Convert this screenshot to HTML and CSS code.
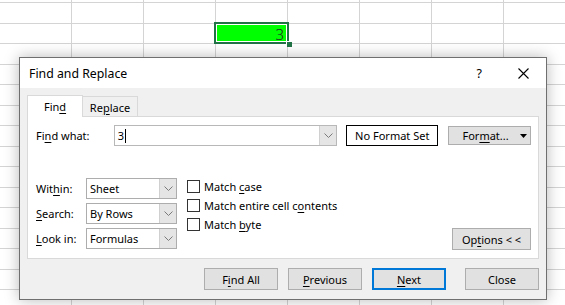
FILE: index.html
```html
<!DOCTYPE html>
<html>
<head>
<meta charset="utf-8">
<link rel="stylesheet" href="styles.css">
</head>
<body>
<div class="sheet">
  <div class="cell-sel"><span class="cell-val">3</span><i class="handle"></i></div>
</div>
<div class="dialog">
  <div class="titlebar">
    <span class="title">Find and Replace</span>
    <span class="help">?</span>
    <span class="close-x"><svg width="11" height="11" viewBox="0 0 11 11"><path d="M0.5 0.5L10.5 10.5M10.5 0.5L0.5 10.5" stroke="#000" stroke-width="1.1" fill="none"/></svg></span>
  </div>
  <div class="dbody">
    <div class="tabs">
      <div class="tab active">Fin<u>d</u></div>
      <div class="tab">Re<u>p</u>lace</div>
    </div>
    <div class="panel">
      <div class="find-row">
        <label class="lbl-find">Fi<u>n</u>d what:</label>
        <div class="combo combo-find">
          <span class="combo-text">3<i class="caret"></i></span>
          <span class="combo-btn"><svg width="9" height="5" viewBox="0 0 9 5"><path d="M0.5 0.5L4.5 4.5L8.5 0.5" stroke="#7a7a7a" fill="none"/></svg></span>
        </div>
        <div class="nofmt">No Format Set</div>
        <div class="btn fmt">For<u>m</u>at...<svg class="tri" width="7" height="4" viewBox="0 0 7 4"><path d="M0 0H7L3.5 4Z" fill="#000"/></svg></div>
      </div>
      <div class="opts">
        <div class="selects">
          <label>Wit<u>h</u>in:</label>
          <div class="combo"><span class="combo-text">Sheet</span><span class="combo-btn"><svg width="9" height="5" viewBox="0 0 9 5"><path d="M0.5 0.5L4.5 4.5L8.5 0.5" stroke="#7a7a7a" fill="none"/></svg></span></div>
          <label><u>S</u>earch:</label>
          <div class="combo"><span class="combo-text">By Rows</span><span class="combo-btn"><svg width="9" height="5" viewBox="0 0 9 5"><path d="M0.5 0.5L4.5 4.5L8.5 0.5" stroke="#7a7a7a" fill="none"/></svg></span></div>
          <label><u>L</u>ook in:</label>
          <div class="combo"><span class="combo-text">Formulas</span><span class="combo-btn"><svg width="9" height="5" viewBox="0 0 9 5"><path d="M0.5 0.5L4.5 4.5L8.5 0.5" stroke="#7a7a7a" fill="none"/></svg></span></div>
        </div>
        <div class="checks">
          <div class="chk"><i class="box"></i><span>Match <u>c</u>ase</span></div>
          <div class="chk"><i class="box"></i><span>Match entire cell c<u>o</u>ntents</span></div>
          <div class="chk"><i class="box"></i><span>Match <u>b</u>yte</span></div>
        </div>
        <div class="btn optbtn">Op<u>t</u>ions &lt; &lt;</div>
      </div>
    </div>
    <div class="actions">
      <div class="btn act">F<u>i</u>nd All</div>
      <div class="btn act"><u>P</u>revious</div>
      <div class="btn act primary"><u>N</u>ext</div>
      <div class="btn act close">Close</div>
    </div>
  </div>
</div>
</body>
</html>
```
FILE: styles.css
```css
html, body {
  margin: 0;
  padding: 0;
}
body {
  width: 565px;
  height: 305px;
  overflow: hidden;
  position: relative;
  background-color: #fff;
  font-family: "Noto Sans", "Open Sans", sans-serif;
}
.sheet {
  width: 565px;
  height: 305px;
  position: relative;
  background-image:
    linear-gradient(to right, #d4d4d4 1px, transparent 1px),
    linear-gradient(to bottom, #d4d4d4 0, #d4d4d4 1px, transparent 1px, transparent 20px, #d4d4d4 20px, #d4d4d4 21px, transparent 21px);
  background-size: 72px 100%, 100% 41px;
  background-position: 71px 0, 0 23px;
}
.cell-sel {
  position: absolute;
  left: 214px;
  top: 22px;
  width: 71px;
  height: 18px;
  border: 2px solid #217346;
  box-shadow: inset 0 0 0 1px #fff;
  background: #00ff00;
  display: flex;
  justify-content: flex-end;
  align-items: center;
}
.cell-val {
  font-family: "Noto Sans", sans-serif;
  font-weight: 300;
  font-size: 15px;
  line-height: 16px;
  color: #222;
  margin-right: 3px;
  margin-top: 1px;
}
.handle {
  position: absolute;
  right: -5px;
  bottom: -5px;
  width: 5px;
  height: 5px;
  background: #217346;
  border: 1px solid #fff;
  border-width: 1px 0 0 1px;
}

/* dialog */
.dialog {
  position: absolute;
  left: 19px;
  top: 57px;
  width: 526px;
  height: 241px;
  border: 1px solid #6f6f6f;
  background: #f0f0f0;
  box-shadow: 0 0 14px rgba(0,0,0,0.28);
  display: flex;
  flex-direction: column;
  font-size: 11px;
  color: #000;
}
.titlebar {
  height: 30px;
  background: #fff;
  display: flex;
  align-items: center;
  padding-left: 9px;
}
.title {
  font-size: 12.3px;
  flex: 1;
  margin-top: 1px;
}
.help {
  font-size: 12.5px;
  margin-right: 36px;
}
.close-x {
  display: flex;
  margin-right: 17px;
}
.dbody {
  flex: 1;
  padding: 8px 7px 0 7px;
  display: flex;
  flex-direction: column;
}
.tabs {
  display: flex;
  height: 21px;
  align-items: flex-end;
  position: relative;
  z-index: 1;
  margin-bottom: -1px;
}
.tab {
  box-sizing: border-box;
  width: 56px;
  height: 20px;
  border: 1px solid #d9d9d9;
  border-bottom: none;
  background: #f0f0f0;
  display: flex;
  align-items: center;
  justify-content: center;
  margin-bottom: 1px;
  padding-top: 1px;
}
.tab.active {
  height: 22px;
  background: #fff;
  margin-bottom: 0;
  padding-bottom: 1px;
}
.tab + .tab {
  margin-left: -1px;
}
.panel {
  box-sizing: border-box;
  height: 143px;
  background: #fff;
  border: 1px solid #d9d9d9;
  padding: 8px 7px 8px 8px;
  display: flex;
  flex-direction: column;
}
.find-row {
  display: flex;
  align-items: center;
  height: 21px;
}
.lbl-find {
  width: 78px;
}
.combo {
  box-sizing: border-box;
  height: 21px;
  border: 1px solid #adadad;
  background: #fff;
  display: flex;
  align-items: stretch;
}
.combo-find {
  width: 224px;
  border-color: #b8b8b8;
}
.combo-text {
  flex: 1;
  padding-left: 3px;
  display: flex;
  align-items: center;
}
.caret {
  display: inline-block;
  width: 1px;
  height: 14px;
  background: #000;
  margin-left: 1px;
}
.combo-btn {
  width: 16px;
  background: #e5e5e5;
  border-left: 1px solid #d0d0d0;
  display: flex;
  align-items: center;
  justify-content: center;
}
.nofmt {
  box-sizing: border-box;
  width: 92px;
  height: 21px;
  margin-left: 9px;
  border: 1px solid #000;
  display: flex;
  align-items: center;
  justify-content: center;
}
.btn {
  box-sizing: border-box;
  background: #e1e1e1;
  border: 1px solid #adadad;
  display: flex;
  align-items: center;
  justify-content: center;
}
.fmt {
  width: 83px;
  height: 19px;
  margin-left: 10px;
  position: relative;
  padding-right: 8px;
}
.tri {
  position: absolute;
  right: 3px;
  top: 7px;
}
.opts {
  display: flex;
  align-items: flex-start;
  margin-top: 32px;
  flex: 1;
}
.selects {
  display: grid;
  grid-template-columns: 50px 91px;
  row-gap: 4px;
  align-items: center;
}
.selects .combo {
  width: 91px;
}
.checks {
  margin-left: 10px;
  margin-top: 2px;
  display: flex;
  flex-direction: column;
  gap: 6px;
}
.chk {
  display: flex;
  align-items: center;
  height: 13px;
}
.box {
  box-sizing: border-box;
  width: 13px;
  height: 13px;
  border: 1px solid #333;
  background: #fff;
  margin-right: 4px;
}
.optbtn {
  margin-left: auto;
  align-self: flex-end;
  width: 79px;
  height: 22px;
}
.actions {
  display: flex;
  justify-content: flex-end;
  margin-top: 9px;
  gap: 10px;
}
.act {
  width: 74px;
  height: 22px;
}
.primary {
  border: 2px solid #0078d7;
}
.close {
  margin-left: 9px;
}
u {
  text-decoration: underline;
  text-underline-offset: 2px;
}
```
